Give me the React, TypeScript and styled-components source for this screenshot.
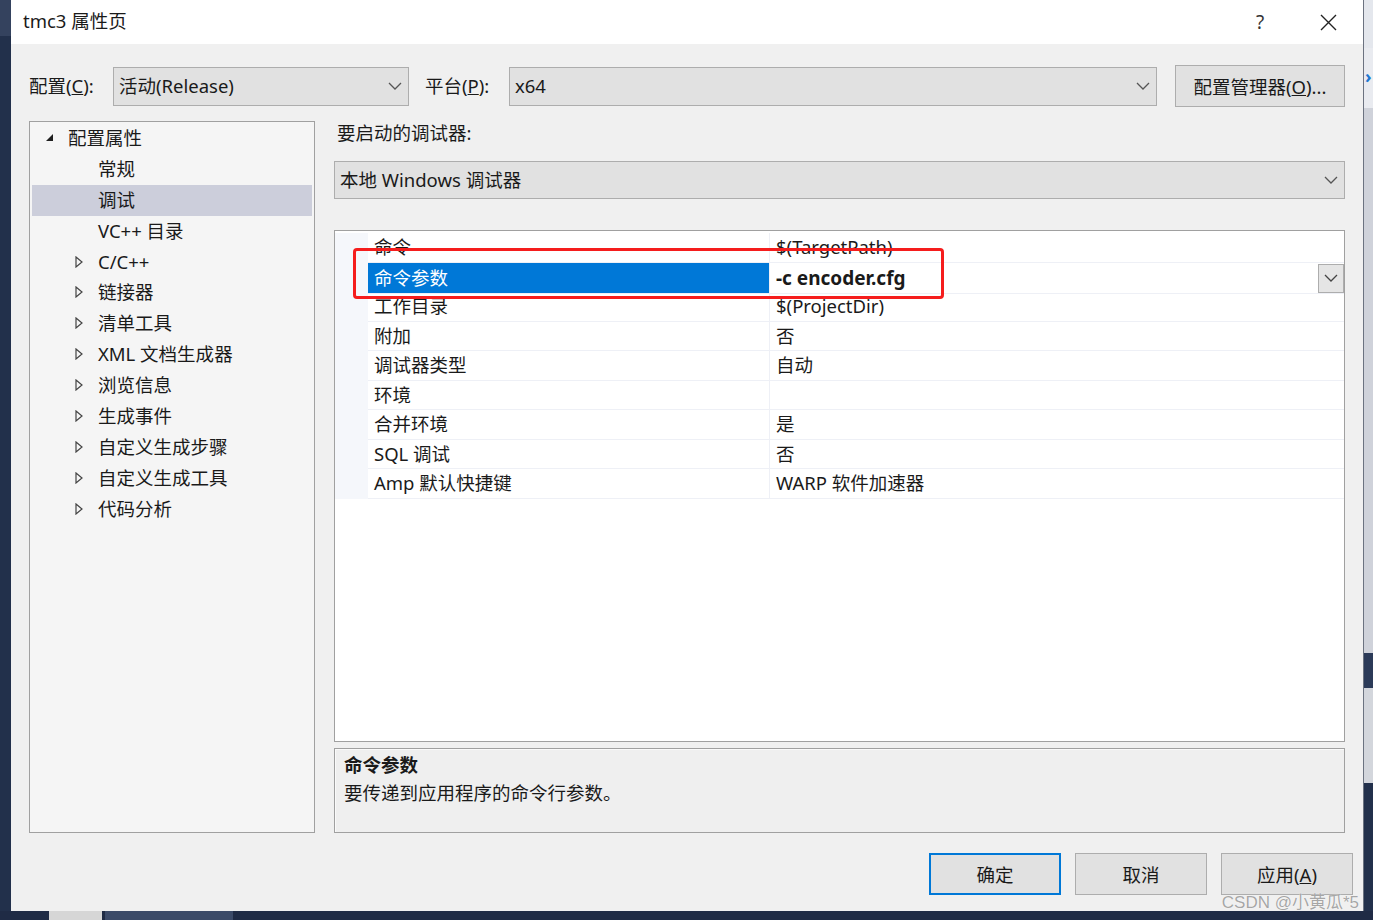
import React from 'react';
import styled, { createGlobalStyle } from 'styled-components';

const FONT = `"Noto Sans", "Noto Sans CJK SC", sans-serif`;
const FS = '18.5px';

const GlobalStyle = createGlobalStyle`
  html, body {
    margin: 0;
    padding: 0;
    background: #1f2b45;
    overflow: hidden;
  }
  * { box-sizing: border-box; }
`;

// --- fondo de escritorio ---
const Screen = styled.div`
  position: relative;
  width: 1373px;
  height: 920px;
  display: flex;
  flex-direction: column;
  font-family: ${FONT};
  color: #1a1a1a;
`;

const TopRow = styled.div`
  display: flex;
  height: 911px;
`;

const LeftEdge = styled.div`
  width: 11px;
  background: linear-gradient(#34425e 0 36px, #22304b 36px);
`;

const RightEdge = styled.div`
  width: 9px;
  display: flex;
  flex-direction: column;
  overflow: hidden;
`;

const EdgeSegment = styled.div<{ $h: number; $bg: string }>`
  height: ${(p) => p.$h}px;
  background: ${(p) => p.$bg};
  color: #1e78d0;
  font-size: 18px;
  font-weight: 700;
  line-height: ${(p) => p.$h - 4}px;
  padding-left: 1px;
`;

const BottomStrip = styled.div`
  height: 9px;
  display: flex;
  gap: 3px;
  padding-left: 49px;
  background: #1f2b45;
`;

const TaskTab = styled.div<{ $w: number; $bg: string }>`
  width: ${(p) => p.$w}px;
  background: ${(p) => p.$bg};
`;

// --- ventana ---
const Dialog = styled.div`
  width: 1353px;
  display: flex;
  flex-direction: column;
  background: #f0f0f0;
  border-right: 1px solid #6b7280;
`;

const TitleBar = styled.div`
  height: 44px;
  background: #fff;
  display: flex;
  align-items: center;
  padding-left: 12px;
`;

const Title = styled.div`
  font-size: ${FS};
  line-height: 24px;
  flex: 1;
  margin-top: -3px;
`;

const TitleButton = styled.div<{ $w: number }>`
  width: ${(p) => p.$w}px;
  height: 44px;
  display: flex;
  align-items: center;
  justify-content: center;
  font-size: 19px;
  color: #333;
`;

const Body = styled.div`
  flex: 1;
  display: flex;
  flex-direction: column;
  padding: 21px 18px 0 18px;
`;

const ConfigRow = styled.div`
  display: flex;
  align-items: center;
  height: 42px;
`;

const FieldLabel = styled.div<{ $w: number; $ml?: number }>`
  width: ${(p) => p.$w}px;
  margin-left: ${(p) => p.$ml ?? 0}px;
  font-size: ${FS};
  line-height: 24px;
  white-space: nowrap;
`;

const Combo = styled.div<{ $w?: number; $h: number }>`
  ${(p) => (p.$w ? `width: ${p.$w}px;` : 'flex: 1;')}
  height: ${(p) => p.$h}px;
  background: #e1e1e1;
  border: 1px solid #adadad;
  display: flex;
  align-items: center;
  padding: 0 6px 0 5px;
  font-size: ${FS};
  line-height: 24px;
`;

const ComboText = styled.span`
  flex: 1;
  white-space: nowrap;
`;

const PushButton = styled.button<{ $w: number; $default?: boolean }>`
  width: ${(p) => p.$w}px;
  height: 42px;
  background: #e1e1e1;
  border: ${(p) => (p.$default ? '2px solid #0078d7' : '1px solid #adadad')};
  font-family: ${FONT};
  font-size: ${FS};
  color: #1a1a1a;
  padding: 0;
  cursor: default;
`;

const Main = styled.div`
  display: flex;
  gap: 19px;
  margin-top: 14px;
  height: 712px;
`;

// --- árbol ---
const Tree = styled.div`
  width: 286px;
  background: #f5f5f5;
  border: 1px solid #a0a0a0;
  padding: 1px 2px;
`;

const TreeRow = styled.div<{ $level: number; $selected?: boolean }>`
  height: 30.9px;
  display: flex;
  align-items: center;
  padding-left: ${(p) => 13 + p.$level * 30}px;
  padding-bottom: 1px;
  background: ${(p) => (p.$selected ? '#cccedb' : 'transparent')};
  font-size: ${FS};
  line-height: 24px;
  white-space: nowrap;
`;

const Expander = styled.span`
  width: 23px;
  display: flex;
  align-items: center;
`;

// --- columna derecha ---
const RightCol = styled.div`
  flex: 1;
  display: flex;
  flex-direction: column;
`;

const SectionLabel = styled.div`
  font-size: ${FS};
  line-height: 24px;
  padding-left: 3px;
  margin-bottom: 16px;
`;

const Grid = styled.div`
  position: relative;
  margin-top: 31px;
  height: 512px;
  padding-top: 2px;
  background: #fff;
  border: 1px solid #a0a0a0;
  overflow: hidden;
`;

const GridRow = styled.div`
  display: grid;
  grid-template-columns: 33px 402px 1fr;
  height: 29.5px;
`;

const Gutter = styled.div`
  background: #f5f7fb;
`;

const Cell = styled.div<{ $selected?: boolean; $bold?: boolean; $value?: boolean }>`
  display: flex;
  align-items: center;
  padding-left: 6px;
  border-bottom: 1px solid #eef0f6;
  ${(p) => (p.$value ? '' : 'border-right: 1px solid #eef0f6;')}
  background: ${(p) => (p.$selected ? '#0078d7' : 'transparent')};
  color: ${(p) => (p.$selected ? '#fff' : '#1a1a1a')};
  font-size: ${(p) => (p.$bold ? '19px' : FS)};
  font-weight: ${(p) => (p.$bold ? 700 : 400)};
  line-height: 24px;
  white-space: nowrap;
`;

const CellText = styled.span`
  flex: 1;
`;

const CellDrop = styled.div`
  width: 26px;
  height: 29px;
  background: #e5e5e5;
  border: 1px solid #adadad;
  display: flex;
  align-items: center;
  justify-content: center;
  margin-top: 1px;
`;

const Highlight = styled.div`
  position: absolute;
  left: 18px;
  top: 17px;
  width: 591px;
  height: 51px;
  border: 3px solid #f51d1d;
  border-radius: 4px;
  pointer-events: none;
`;

const Description = styled.div`
  margin-top: 6px;
  height: 85px;
  background: #efefef;
  border: 1px solid #a0a0a0;
  box-shadow: inset 1px 1px 0 #fafafa;
  padding: 2px 9px;
  font-size: ${FS};
  line-height: 28px;
`;

const DescTitle = styled.div`
  font-weight: 700;
`;

const Footer = styled.div`
  display: flex;
  justify-content: flex-end;
  gap: 14px;
  padding: 20px 10px 0 0;
  margin-right: -18px;
`;

const Watermark = styled.div`
  position: absolute;
  right: 14px;
  top: 888px;
  font-family: "Liberation Sans", "Noto Sans CJK SC", sans-serif;
  font-size: 17px;
  color: rgba(150, 150, 150, 0.85);
  text-shadow: 0 0 1px #fff;
  white-space: nowrap;
`;

const Chevron: React.FC<{ color?: string }> = ({ color = '#555' }) => (
  <svg width="14" height="8" viewBox="0 0 14 8">
    <path d="M1 1 L7 7 L13 1" fill="none" stroke={color} strokeWidth="1.3" />
  </svg>
);

const CloseIcon = () => (
  <svg width="17" height="17" viewBox="0 0 17 17">
    <path d="M1 1 L16 16 M16 1 L1 16" stroke="#222" strokeWidth="1.4" />
  </svg>
);

const OpenArrow = () => (
  <svg width="9" height="9" viewBox="0 0 9 9">
    <path d="M8 1 L8 8 L1 8 Z" fill="#1e1e1e" />
  </svg>
);

const ClosedArrow = () => (
  <svg width="8" height="12" viewBox="0 0 8 12">
    <path d="M1 1 L7 6 L1 11 Z" fill="none" stroke="#444" strokeWidth="1.2" />
  </svg>
);

type TreeItem = { label: string; level: number; exp?: 'open' | 'closed'; selected?: boolean };

const treeItems: TreeItem[] = [
  { label: '配置属性', level: 0, exp: 'open' },
  { label: '常规', level: 1 },
  { label: '调试', level: 1, selected: true },
  { label: 'VC++ 目录', level: 1 },
  { label: 'C/C++', level: 1, exp: 'closed' },
  { label: '链接器', level: 1, exp: 'closed' },
  { label: '清单工具', level: 1, exp: 'closed' },
  { label: 'XML 文档生成器', level: 1, exp: 'closed' },
  { label: '浏览信息', level: 1, exp: 'closed' },
  { label: '生成事件', level: 1, exp: 'closed' },
  { label: '自定义生成步骤', level: 1, exp: 'closed' },
  { label: '自定义生成工具', level: 1, exp: 'closed' },
  { label: '代码分析', level: 1, exp: 'closed' },
];

const props: { name: string; value: string; selected?: boolean }[] = [
  { name: '命令', value: '$(TargetPath)' },
  { name: '命令参数', value: '-c encoder.cfg', selected: true },
  { name: '工作目录', value: '$(ProjectDir)' },
  { name: '附加', value: '否' },
  { name: '调试器类型', value: '自动' },
  { name: '环境', value: '' },
  { name: '合并环境', value: '是' },
  { name: 'SQL 调试', value: '否' },
  { name: 'Amp 默认快捷键', value: 'WARP 软件加速器' },
];

const App: React.FC = () => (
  <Screen>
    <GlobalStyle />
    <TopRow>
      <LeftEdge />
      <Dialog>
        <TitleBar>
          <Title>tmc3 属性页</Title>
          <TitleButton $w={66}>?</TitleButton>
          <TitleButton $w={70}>
            <CloseIcon />
          </TitleButton>
        </TitleBar>

        <Body>
          <ConfigRow>
            <FieldLabel $w={84}>
              配置(<u>C</u>):
            </FieldLabel>
            <Combo $w={296} $h={39}>
              <ComboText>活动(Release)</ComboText>
              <Chevron />
            </Combo>
            <FieldLabel $w={84} $ml={16}>
              平台(<u>P</u>):
            </FieldLabel>
            <Combo $h={39}>
              <ComboText>x64</ComboText>
              <Chevron />
            </Combo>
            <PushButton $w={170} style={{ marginLeft: 18 }}>
              配置管理器(<u>O</u>)...
            </PushButton>
          </ConfigRow>

          <Main>
            <Tree>
              {treeItems.map((t) => (
                <TreeRow key={t.label} $level={t.level} $selected={t.selected}>
                  <Expander>
                    {t.exp === 'open' && <OpenArrow />}
                    {t.exp === 'closed' && <ClosedArrow />}
                  </Expander>
                  {t.label}
                </TreeRow>
              ))}
            </Tree>

            <RightCol>
              <SectionLabel>要启动的调试器:</SectionLabel>
              <Combo $h={38}>
                <ComboText>本地 Windows 调试器</ComboText>
                <Chevron />
              </Combo>

              <Grid>
                {props.map((p) => (
                  <GridRow key={p.name}>
                    <Gutter />
                    <Cell $selected={p.selected}>{p.name}</Cell>
                    <Cell $value $bold={p.selected}>
                      <CellText>{p.value}</CellText>
                      {p.selected && (
                        <CellDrop>
                          <Chevron color="#444" />
                        </CellDrop>
                      )}
                    </Cell>
                  </GridRow>
                ))}
                <Highlight />
              </Grid>

              <Description>
                <DescTitle>命令参数</DescTitle>
                <div>要传递到应用程序的命令行参数。</div>
              </Description>
            </RightCol>
          </Main>

          <Footer>
            <PushButton $w={132} $default>
              确定
            </PushButton>
            <PushButton $w={132}>取消</PushButton>
            <PushButton $w={132}>
              应用(<u>A</u>)
            </PushButton>
          </Footer>
        </Body>
      </Dialog>
      <RightEdge>
        <EdgeSegment $h={48} $bg="#e4e7ed" />
        <EdgeSegment $h={60} $bg="#e9ebf0">›</EdgeSegment>
        <EdgeSegment $h={545} $bg="#cfd2da" />
        <EdgeSegment $h={35} $bg="#2b3a58" />
        <EdgeSegment $h={95} $bg="#d3d6dc" />
        <EdgeSegment $h={128} $bg="#22304b" />
      </RightEdge>
    </TopRow>
    <BottomStrip>
      <TaskTab $w={53} $bg="#d6d6d6" />
      <TaskTab $w={128} $bg="#3b4a68" />
    </BottomStrip>
    <Watermark>CSDN @小黄瓜*5</Watermark>
  </Screen>
);

export default App;
